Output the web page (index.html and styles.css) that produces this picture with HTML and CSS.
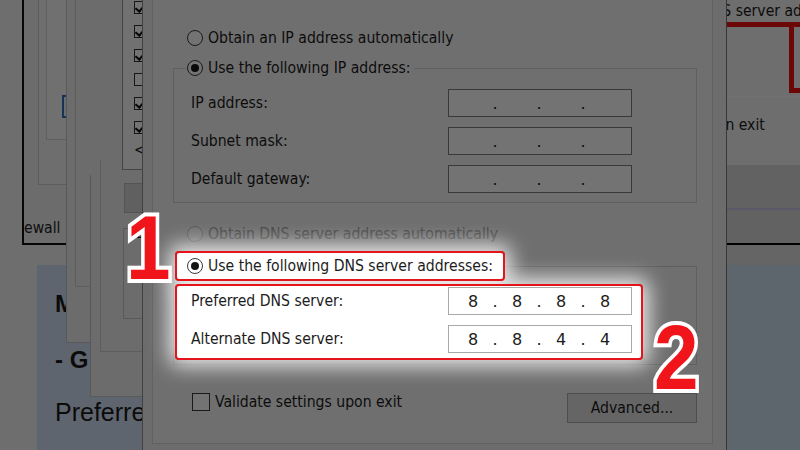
FILE: index.html
```html
<!DOCTYPE html>
<html lang="en">

<head>
  <meta charset="UTF-8">
  <meta name="viewport" content="width=device-width, initial-scale=1.0">
  <title>DNS settings</title>
  <link rel="stylesheet" href="styles.css">
</head>

<body>

  <!-- windows behind the dialog -->
  <div class="desk-left">
    <div class="article">
      <p class="article-head">M</p>
      <p class="article-head second">- G</p>
      <p class="article-text">Preferre</p>
    </div>

    <div class="shot shot-fw">
      <div class="fw-panel">
        <div class="fw-inner"><span class="fw-btn"></span></div>
      </div>
      <span class="fw-caption">ewall</span>
    </div>

    <div class="shot shot-props"></div>
    <div class="shot shot-page"></div>
    <div class="shot shot-back"></div>
    <div class="shot shot-group"></div>

    <div class="shot shot-list">
      <span class="tick on"></span>
      <span class="tick on"></span>
      <span class="tick on"></span>
      <span class="tick"></span>
      <span class="tick on"></span>
      <span class="tick on"></span>
      <span class="list-arrow">&lt;</span>
    </div>
    <div class="shot shot-button"></div>
    <div class="shot shot-frame"><span class="frame-letter">L</span></div>
  </div>

  <div class="dialog">
    <div class="tab-page">
      <div class="option">
        <span class="radio"></span>Obtain an IP address automatically
      </div>

      <fieldset class="group ip-group">
        <legend class="ip-legend">
          <span class="option"><span class="radio on"></span>Use the following IP address:</span>
        </legend>
        <div class="field">
          <span class="field-label">IP address:</span>
          <span class="ip-box"><span class="octet"></span><span class="sep">.</span><span class="octet"></span><span class="sep">.</span><span class="octet"></span><span class="sep">.</span><span class="octet"></span></span>
        </div>
        <div class="field">
          <span class="field-label">Subnet mask:</span>
          <span class="ip-box"><span class="octet"></span><span class="sep">.</span><span class="octet"></span><span class="sep">.</span><span class="octet"></span><span class="sep">.</span><span class="octet"></span></span>
        </div>
        <div class="field">
          <span class="field-label">Default gateway:</span>
          <span class="ip-box"><span class="octet"></span><span class="sep">.</span><span class="octet"></span><span class="sep">.</span><span class="octet"></span><span class="sep">.</span><span class="octet"></span></span>
        </div>
      </fieldset>

      <div class="option disabled dns-auto">
        <span class="radio"></span>Obtain DNS server address automatically
      </div>

      <fieldset class="group dns-group">
        <legend class="callout dns-legend">
          <span class="option"><span class="radio on"></span>Use the following DNS server addresses:</span>
        </legend>
        <div class="callout dns-box">
          <div class="field">
            <span class="field-label">Preferred DNS server:</span>
            <span class="ip-box"><span class="octet">8</span><span class="sep">.</span><span class="octet">8</span><span class="sep">.</span><span class="octet">8</span><span class="sep">.</span><span class="octet">8</span></span>
          </div>
          <div class="field">
            <span class="field-label">Alternate DNS server:</span>
            <span class="ip-box"><span class="octet">8</span><span class="sep">.</span><span class="octet">8</span><span class="sep">.</span><span class="octet">4</span><span class="sep">.</span><span class="octet">4</span></span>
          </div>
        </div>
      </fieldset>

      <div class="footer">
        <div class="check-row"><span class="checkbox"></span>Validate settings upon exit</div>
        <button class="btn">Advanced...</button>
      </div>
    </div>
  </div>

  <div class="desk-right">
    <div class="rw-top">
      <div class="rw-caption">DNS server addresses</div>
      <div class="rw-frame"><span class="rw-mark"></span></div>
      <div class="rw-rule"></div>
      <div class="rw-exit">upon exit</div>
    </div>
    <div class="rw-band lined"></div>
    <div class="rw-band dark-lined"></div>
    <div class="rw-band short"></div>
    <div class="rw-blue"></div>
  </div>

  <!-- dimming + highlight -->
  <div class="dim"></div>
  <div class="glow glow-1"></div>
  <div class="glow glow-2"></div>

  <span class="step step-1">1</span>
  <span class="step step-2">2</span>

</body>

</html>
```

FILE: styles.css
```css
* {
  box-sizing: border-box;
}

body {
  margin: 0;
  width: 800px;
  height: 450px;
  overflow: hidden;
  position: relative;
  display: flex;
  font-family: "DejaVu Sans Condensed", "DejaVu Sans", sans-serif;
  font-stretch: condensed;
  font-size: 15.6px;
  color: #1c1c1c;
  background-color: #f2f2f2;
}

/* Left side: windows behind */
.desk-left {
  position: relative;
  width: 142px;
  flex: none;
  overflow: hidden;
  background-color: #f3f3f3;
}

.article {
  position: absolute;
  left: 37px;
  top: 265px;
  width: 140px;
  height: 200px;
  background-color: #d3e1f3;
  padding: 24px 0 0 18px;
  font-family: "Liberation Sans", Arial, sans-serif;
  font-stretch: normal;
  color: #1a1a1a;
}

.article p {
  margin: 0;
  line-height: 30px;
  white-space: nowrap;
}

.article-head {
  font-size: 24px;
  font-weight: bold;
}

.article-head.second {
  margin-top: 26px !important;
}

.article-text {
  margin-top: 22px !important;
  font-size: 25px;
}

.shot {
  position: absolute;
  background-color: #f0f0f0;
  border: 1px solid #c6c6c6;
}

.shot-fw {
  left: 22px;
  top: -4px;
  width: 160px;
  height: 249px;
  border: 2px solid #0e0e0e;
  padding-left: 14px;
}

.fw-panel {
  height: 187px;
  border: 1px solid #cdcdcd;
  border-top: 0;
  padding-left: 7px;
  background-color: #f4f4f4;
}

.fw-inner {
  height: 142px;
  border: 1px solid #d3d3d3;
  border-top: 0;
  padding: 97px 0 0 15px;
  background-color: #f9f9f9;
}

.fw-btn {
  display: block;
  width: 40px;
  height: 23px;
  border: 2px solid #2f6fc0;
  background-color: #e5f1fb;
}

.fw-caption {
  display: block;
  margin: 33px 0 0 -14px;
  line-height: 20px;
  color: #222;
}

.shot-props {
  left: 66px;
  top: -2px;
  width: 120px;
  height: 345px;
}

.shot-page {
  left: 75px;
  top: -2px;
  width: 110px;
  height: 289px;
  border-color: #d0d0d0;
}

.shot-back {
  left: 90px;
  top: 175px;
  width: 100px;
  height: 222px;
  border-top: 0;
}

.shot-group {
  left: 100px;
  top: 160px;
  width: 90px;
  height: 192px;
  border-color: #cfcfcf;
  border-top: 0;
}

.shot-list {
  left: 122px;
  top: -2px;
  width: 40px;
  height: 172px;
  border-color: #9a9a9a;
  background-color: #fbfbfb;
  padding: 2px 0 0 11px;
}

.tick {
  display: block;
  position: relative;
  width: 13px;
  height: 13px;
  border: 1px solid #333;
  background-color: #fff;
  margin-bottom: 11px;
}

.tick.on::after {
  content: '';
  position: absolute;
  left: 2px;
  top: 1px;
  width: 4px;
  height: 7px;
  border-right: 2px solid #111;
  border-bottom: 2px solid #111;
  transform: rotate(40deg);
}

.list-arrow {
  display: block;
  margin-top: -4px;
  font-size: 15px;
  color: #222;
}

.shot-button {
  left: 124px;
  top: 183px;
  width: 30px;
  height: 30px;
  background-color: #d6d6d6;
  border-color: #bbb;
}

.shot-frame {
  left: 123px;
  top: 228px;
  width: 40px;
  height: 91px;
  padding-left: 12px;
}

.frame-letter {
  display: block;
  line-height: 14px;
  margin-top: -3px;
  font-size: 15px;
}

/* Dialog */
.dialog {
  width: 585px;
  flex: none;
  background-color: #f0f0f0;
  border-left: 1px solid #8e8e8e;
  border-right: 1px solid #7a7a7a;
  padding: 0 13px 0 9px;
}

.tab-page {
  height: 444px;
  background-color: #f6f6f6;
  border: 1px solid #d8d8d8;
  border-top: 0;
  padding: 27px 15px 0 20px;
}

.option {
  display: flex;
  align-items: center;
  gap: 5px;
  height: 22px;
  margin-left: 14px;
  white-space: nowrap;
}

.radio {
  display: flex;
  align-items: center;
  justify-content: center;
  width: 16px;
  height: 16px;
  flex: none;
  border: 1px solid #3a3a3a;
  border-radius: 50%;
  background-color: #fff;
}

.radio.on::after {
  content: '';
  width: 8px;
  height: 8px;
  border-radius: 50%;
  background-color: #141414;
}

.option.disabled {
  color: #a2a2a2;
}

.option.disabled .radio {
  border-color: #bdbdbd;
}

.group {
  margin: 8px 0 0;
  border: 1px solid #d3d3d3;
  min-width: 0;
}

.group legend {
  padding: 0;
}

.ip-group {
  padding: 10px 0 9px 12px;
}

.ip-legend .option {
  margin-left: 1px;
  padding-right: 3px;
}

.field {
  display: flex;
  align-items: center;
  height: 28px;
  padding-left: 5px;
  white-space: nowrap;
}

.field + .field {
  margin-top: 10px;
}

.field-label {
  width: 257px;
  flex: none;
}

.ip-box {
  display: flex;
  align-items: center;
  width: 184px;
  height: 28px;
  padding-left: 9px;
  border: 1px solid #7e7e7e;
  background-color: #fff;
  font-family: "DejaVu Sans", sans-serif;
  font-stretch: normal;
  font-size: 16px;
}

.octet {
  width: 30px;
  text-align: center;
}

.sep {
  width: 14px;
  text-align: center;
}

.dns-auto {
  margin-top: 20px;
}

.dns-group {
  margin-top: 6px;
  padding: 3px 0 4px 1px;
}

/* highlighted parts */
.callout {
  position: relative;
  z-index: 10;
  background-color: #fff;
  border: 2px solid #e5141b;
  border-radius: 4px;
}

.dns-legend {
  width: 330px;
  height: 30px;
  display: flex;
  align-items: center;
}

.dns-legend .option {
  margin-left: 10px;
}

.dns-box {
  width: 468px;
  padding: 1px 9px 5px 14px;
}

.dns-box .field {
  padding-left: 0;
}

.dns-box .ip-box {
  border-color: #a9a9a9;
}

.footer {
  display: flex;
  justify-content: space-between;
  align-items: flex-start;
  margin-top: 27px;
}

.check-row {
  display: flex;
  align-items: center;
  gap: 5px;
  height: 20px;
  margin-left: 19px;
  white-space: nowrap;
}

.checkbox {
  width: 18px;
  height: 18px;
  border: 1px solid #3a3a3a;
  background-color: #fff;
}

.btn {
  margin-top: 1px;
  width: 130px;
  height: 30px;
  border: 1px solid #adadad;
  background-color: #e1e1e1;
  font: inherit;
  color: inherit;
  padding: 0;
}

/* Right side */
.desk-right {
  flex: 1;
  display: flex;
  flex-direction: column;
  overflow: hidden;
  background-color: #f4f4f4;
}

.rw-top {
  height: 165px;
  flex: none;
}

.rw-caption {
  height: 22px;
  line-height: 22px;
  margin-left: -26px;
  white-space: nowrap;
}

.rw-frame {
  display: flex;
  justify-content: flex-end;
  height: 71px;
  border-top: 5px solid #f01010;
}

.rw-mark {
  width: 11px;
  border-left: 5px solid #f01010;
  border-bottom: 5px solid #f01010;
}

.rw-rule {
  margin-top: 3px;
  border-top: 1px solid #fbfbfb;
}

.rw-exit {
  margin: 18px 0 0 -28px;
  line-height: 20px;
  white-space: nowrap;
}

.rw-band {
  flex: none;
  background-color: #dadada;
}

.rw-band.lined {
  height: 45px;
  border-bottom: 2px solid #c6c6ec;
}

.rw-band.dark-lined {
  height: 35px;
  border-bottom: 2px solid #000;
}

.rw-band.short {
  height: 20px;
  background-color: #e0e0e0;
}

.rw-blue {
  flex: 1;
  background-color: #cedff2;
}

/* Overlay */
.dim {
  position: absolute;
  inset: 0;
  z-index: 5;
  background-color: rgba(0, 0, 0, 0.55);
}

.glow {
  position: absolute;
  z-index: 6;
  border-radius: 4px;
  box-shadow: 0 0 20px 6px rgba(255, 255, 255, 0.85);
}

.glow-1 {
  left: 175px;
  top: 251px;
  width: 330px;
  height: 30px;
}

.glow-2 {
  left: 175px;
  top: 284px;
  width: 468px;
  height: 76px;
}

.step {
  position: absolute;
  z-index: 20;
  font-family: "Liberation Sans", Arial, sans-serif;
  font-stretch: normal;
  font-weight: bold;
  font-size: 91px;
  line-height: 1;
  color: #f0141b;
  -webkit-text-stroke: 8px #fff;
  paint-order: stroke fill;
  transform: scaleX(0.88);
  transform-origin: left top;
}

.step-1 {
  left: 126px;
  top: 202px;
}

.step-2 {
  left: 654px;
  top: 312px;
}
```
